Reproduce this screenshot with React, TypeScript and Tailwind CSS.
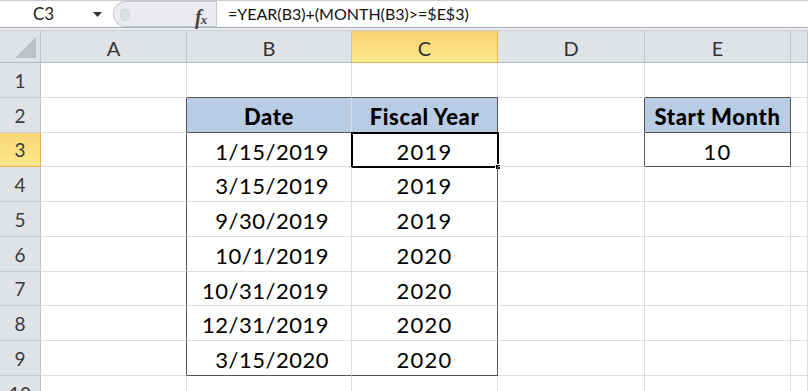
import React from "react";

const W = ["w-[41px]", "w-[146px]", "w-[165px]", "w-[146px]", "w-[147px]", "w-[146px]", "flex-1"];
const rowH = ["h-[35px]", "h-[35px]", "h-[34px]", "h-[35px]", "h-[35px]", "h-[35px]", "h-[34px]", "h-[35px]", "h-[35px]", "h-[35px]"];

const data: [string, string][] = [
  ["1/15/2019", "2019"],
  ["3/15/2019", "2019"],
  ["9/30/2019", "2019"],
  ["10/1/2019", "2020"],
  ["10/31/2019", "2020"],
  ["12/31/2019", "2020"],
  ["3/15/2020", "2020"],
];

const font = { fontFamily: "Lato, 'Open Sans', sans-serif" };

function RowHeader({ n, sel, h }: { n: number; sel?: boolean; h: string }) {
  return (
    <div
      className={
        "shrink-0 w-[41px] flex items-center justify-center pt-[2px] border-r border-b text-[19px] text-[#3a3a3a] " +
        h +
        (sel
          ? " bg-gradient-to-b from-[#f9d675] to-[#fde88a] border-r-[#e9b04c] border-b-[#e9b04c]"
          : " bg-[#dfe3e8] border-r-[#bfc4ca] border-b-[#c9ced4]")
      }
    >
      {n}
    </div>
  );
}

function Cell({
  w,
  className,
  children,
}: {
  w: string;
  className: string;
  children?: React.ReactNode;
}) {
  return <div className={"shrink-0 h-full border-r border-b relative flex items-center pt-[3px] " + w + " " + className}>{children}</div>;
}

export default function App() {
  return (
    <div className="w-[808px] h-[391px] overflow-hidden bg-white text-black" style={font}>
      {/* formula bar */}
      <div className="h-[28px] flex border-t border-t-[#c9cdd2] border-b border-b-[#a5abb2] bg-white">
        <div className="w-[113px] shrink-0 flex items-center relative">
          <span className="ml-[33px] text-[17px] text-[#222]">C3</span>
          <svg className="absolute left-[93px] top-[11px]" width="9" height="5" viewBox="0 0 9 5">
            <path d="M0 0 H9 L4.5 5 Z" fill="#333" />
          </svg>
        </div>
        <div className="w-[103px] shrink-0 bg-[#e9ebee] rounded-l-[14px] border-l border-t border-b border-[#c4c8cd] flex items-center relative">
          <div className="absolute left-[6px] top-[7px] w-[10px] h-[12px] rounded-full bg-[#dcdfe3] border border-[#cfd3d8]" />
          <span
            className="absolute left-[81px] top-[0px] text-[20px] font-bold text-[#444] tracking-[-1px]"
            style={{ fontFamily: "'Liberation Serif', serif" }}
          >
            <i>f</i>
            <i className="text-[13px]">x</i>
          </span>
        </div>
        <div className="flex-1 border-l border-[#c4c8cd] flex items-center pl-[11px]">
          <span className="text-[16px] text-[#111]">=YEAR(B3)+(MONTH(B3)&gt;=$E$3)</span>
        </div>
      </div>
      <div className="h-[3px] bg-[#eceef1] border-b border-b-[#c9cdd2]" />

      {/* column header */}
      <div className="h-[32px] flex">
        <div className="shrink-0 w-[41px] h-full bg-[#dfe3e8] border-r border-b border-r-[#bfc4ca] border-b-[#b3b9c0] relative">
          <svg className="absolute left-[15px] top-[6px]" width="22" height="22" viewBox="0 0 22 22">
            <path d="M21 0 V21 H0 Z" fill="#bdc2c8" />
          </svg>
        </div>
        {["A", "B", "C", "D", "E", ""].map((l, i) => (
          <div
            key={i}
            className={
              "shrink-0 h-full flex items-center justify-center pt-[2px] text-[20px] text-[#333] border-r border-b " +
              W[i + 1] +
              (l === "C"
                ? " bg-gradient-to-b from-[#f8d170] to-[#fde98b] border-r-[#e9b04c] border-b-[#e9b04c]"
                : " bg-[#dfe3e8] border-r-[#bfc4ca] border-b-[#b3b9c0]")
            }
          >
            {l}
          </div>
        ))}
      </div>

      {/* rows */}
      {Array.from({ length: 10 }).map((_, r) => {
        const n = r + 1;
        const h = rowH[r];
        const inTable = n >= 2 && n <= 9;
        const g = "border-[#dcdedf]";
        const aRight = inTable ? "border-r-[#555]" : "border-r-[#dcdedf]";
        const bcBottom = n === 1 || n === 2 || n === 9 ? "border-b-[#555]" : "border-b-[#dcdedf]";
        const cRight = inTable ? "border-r-[#555]" : "border-r-[#dcdedf]";
        const dRight = n === 2 || n === 3 ? "border-r-[#555]" : "border-r-[#dcdedf]";
        const eBottom = n === 1 || n === 2 || n === 3 ? "border-b-[#555]" : "border-b-[#dcdedf]";
        const eRight = n === 2 || n === 3 ? "border-r-[#555]" : "border-r-[#dcdedf]";
        const d = n >= 3 && n <= 9 ? data[n - 3] : null;
        const hdr = n === 2;
        return (
          <div key={r} className={"flex " + h}>
            <RowHeader n={n} sel={n === 3} h={h} />
            <Cell w={W[1]} className={g + " " + aRight} />
            <Cell
              w={W[2]}
              className={
                g +
                " " +
                bcBottom +
                (hdr
                  ? " bg-[#b8cce4] justify-center font-black text-[22px] tracking-[0.6px]"
                  : " justify-end pr-[22px] text-[22px] tracking-[0.5px]")
              }
            >
              {hdr ? "Date" : d ? d[0] : null}
            </Cell>
            <Cell
              w={W[3]}
              className={
                g +
                " " +
                bcBottom +
                " " +
                cRight +
                (hdr
                  ? " bg-[#b8cce4] justify-center font-black text-[22px] tracking-[0.6px]"
                  : " justify-center text-[22px] tracking-[1.2px]")
              }
            >
              {hdr ? "Fiscal Year" : d ? d[1] : null}
              {n === 3 && (
                <>
                  <div className="absolute left-[-1px] top-[-1px] right-[-2px] bottom-[-2px] border-2 border-black pointer-events-none" />
                  <div className="absolute right-[-4px] bottom-[-4px] w-[6px] h-[6px] bg-black border border-white" />
                </>
              )}
            </Cell>
            <Cell w={W[4]} className={g + " " + dRight} />
            <Cell
              w={W[5]}
              className={
                g +
                " " +
                eBottom +
                " " +
                eRight +
                (hdr
                  ? " bg-[#b8cce4] justify-center font-black text-[22px] tracking-[0.6px]"
                  : " justify-center text-[22px] tracking-[1.2px]")
              }
            >
              {hdr ? "Start Month" : n === 3 ? "10" : null}
            </Cell>
            <Cell w={W[6]} className={g} />
          </div>
        );
      })}
    </div>
  );
}
